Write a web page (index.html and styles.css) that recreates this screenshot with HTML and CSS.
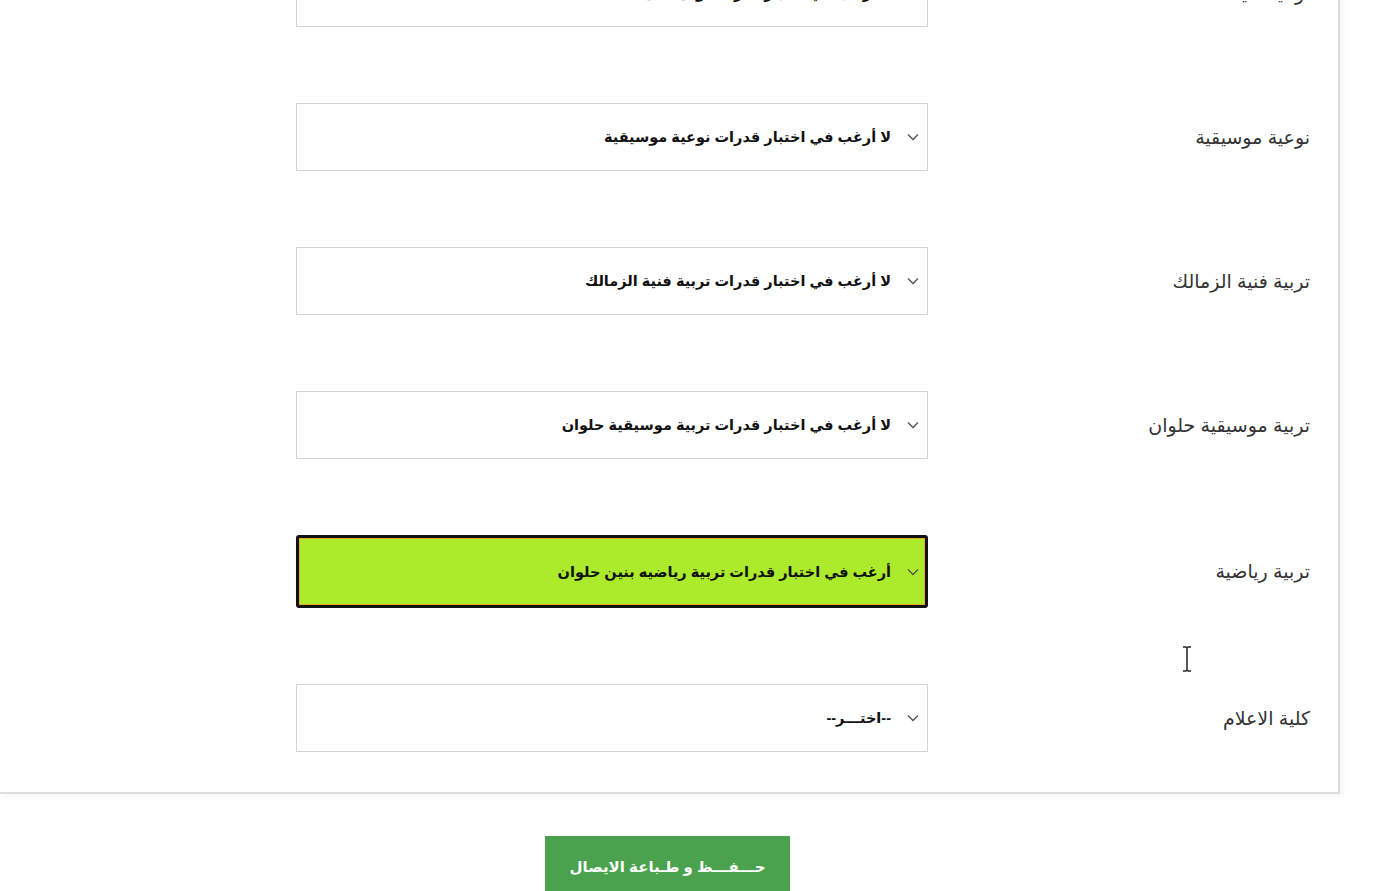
FILE: index.html
```html
<html dir="rtl" lang="ar">
  <head>
    <meta charset="utf-8" />
    <title>اختبارات القدرات</title>
    <link rel="stylesheet" href="styles.css">
  </head>

  <body>
    <div class="panel">
        <div class="row">
            <div class="row-label">نوعية فنية</div>
            <div class="field">
                <svg class="chev" width="12" height="8" viewBox="0 0 12 8"><path d="M1 1.5 L6 6.5 L11 1.5" fill="none" stroke="#555" stroke-width="1.4"/></svg>
                <span class="field-text">لا أرغب في اختبار قدرات نوعية فنية</span>
            </div>
        </div>
        <div class="row">
            <div class="row-label">نوعية موسيقية</div>
            <div class="field">
                <svg class="chev" width="12" height="8" viewBox="0 0 12 8"><path d="M1 1.5 L6 6.5 L11 1.5" fill="none" stroke="#555" stroke-width="1.4"/></svg>
                <span class="field-text">لا أرغب في اختبار قدرات نوعية موسيقية</span>
            </div>
        </div>
        <div class="row">
            <div class="row-label">تربية فنية الزمالك</div>
            <div class="field">
                <svg class="chev" width="12" height="8" viewBox="0 0 12 8"><path d="M1 1.5 L6 6.5 L11 1.5" fill="none" stroke="#555" stroke-width="1.4"/></svg>
                <span class="field-text">لا أرغب في اختبار قدرات تربية فنية الزمالك</span>
            </div>
        </div>
        <div class="row">
            <div class="row-label">تربية موسيقية حلوان</div>
            <div class="field">
                <svg class="chev" width="12" height="8" viewBox="0 0 12 8"><path d="M1 1.5 L6 6.5 L11 1.5" fill="none" stroke="#555" stroke-width="1.4"/></svg>
                <span class="field-text">لا أرغب في اختبار قدرات تربية موسيقية حلوان</span>
            </div>
        </div>
        <div class="row">
            <div class="row-label">تربية رياضية</div>
            <div class="field chosen">
                <svg class="chev" width="12" height="8" viewBox="0 0 12 8"><path d="M1 1.5 L6 6.5 L11 1.5" fill="none" stroke="#555" stroke-width="1.4"/></svg>
                <span class="field-text">أرغب في اختبار قدرات تربية رياضيه بنين حلوان</span>
            </div>
        </div>
        <div class="row">
            <div class="row-label">كلية الاعلام</div>
            <div class="field">
                <svg class="chev" width="12" height="8" viewBox="0 0 12 8"><path d="M1 1.5 L6 6.5 L11 1.5" fill="none" stroke="#555" stroke-width="1.4"/></svg>
                <span class="field-text">--اختـــر--</span>
            </div>
        </div>

        <!-- مؤشر الماوس -->
        <svg class="cursor" width="12" height="26" viewBox="0 0 12 26"><path d="M2 1 H5 Q6 1 6 3 V23 Q6 25 5 25 H2 M10 1 H7 Q6 1 6 3 M6 23 Q6 25 7 25 H10" fill="none" stroke="#222" stroke-width="1.5"/></svg>
    </div>

    <div class="actions">
        <div class="save-btn">حـــفـــظ و طـباعة الايصال</div>
    </div>
  </body>
</html>
```

FILE: styles.css
```css
body {
    margin: 0;
    background-color: #fff;
    font-family: "Liberation Sans", "DejaVu Sans", sans-serif;
    color: #333;
}
.panel {
    position: relative;
    width: 1340px;
    margin: -41px auto 0 0;
    padding: 0 28px 40px 0;
    box-sizing: border-box;
    border-right: 2px solid #ddd;
    border-bottom: 2px solid #ddd;
    box-shadow: 3px 2px 4px rgba(0, 0, 0, 0.04);
    display: flex;
    flex-direction: column;
    gap: 76px;
}
.row {
    display: flex;
    align-items: center;
}
.row-label {
    flex: 0 0 382px;
    font-size: 19px;
    color: #333;
}
.field {
    width: 632px;
    height: 68px;
    box-sizing: border-box;
    border: 1px solid #d4d4d4;
    background-color: #fff;
    display: flex;
    align-items: center;
    padding-right: 8px;
    gap: 16px;
}
.field-text {
    font-size: 14.5px;
    font-weight: bold;
    color: #111;
}
.chev {
    flex: 0 0 auto;
}
.chosen {
    height: 73px;
    border: 3px solid #111;
    border-radius: 3px;
    background-color: #abeb2b;
    box-shadow: inset 0 0 0 1px #e8a820;
    padding-right: 6px;
}
.cursor {
    position: absolute;
    left: 1181px;
    top: 687px;
}
.actions {
    display: flex;
    padding: 42px 0 0 545px;
    direction: ltr;
}
.save-btn {
    width: 245px;
    height: 62px;
    background-color: #4aa24f;
    color: #fff;
    font-size: 15px;
    font-weight: bold;
    display: flex;
    justify-content: center;
    align-items: center;
    direction: rtl;
}
```
